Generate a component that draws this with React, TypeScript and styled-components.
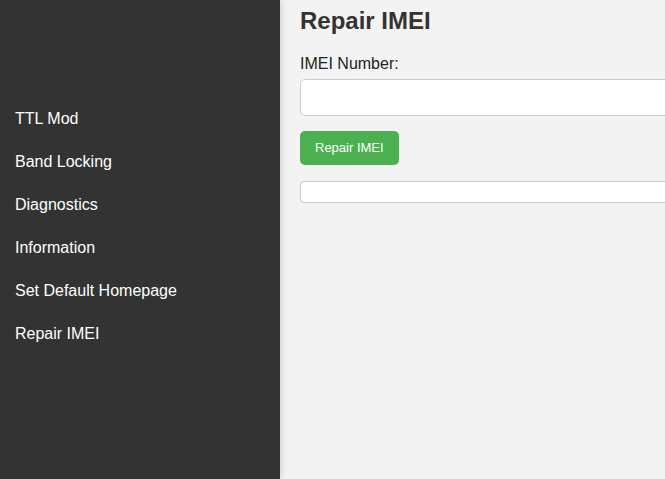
import React from "react";
import styled, { createGlobalStyle } from "styled-components";

const GlobalStyle = createGlobalStyle`
  html, body {
    margin: 0;
    padding: 0;
    height: 100%;
    overflow: hidden;
    background-color: #f3f3f3;
    font-family: "Liberation Sans", Arial, sans-serif;
  }
  #root {
    height: 100%;
  }
`;

const navItems = [
  "TTL Mod",
  "Band Locking",
  "Diagnostics",
  "Information",
  "Set Default Homepage",
  "Repair IMEI",
];

function App() {
  return (
    <>
      <GlobalStyle />
      <Layout>
        <Sidebar>
          <NavList>
            {navItems.map((item) => (
              <NavItem key={item}>{item}</NavItem>
            ))}
          </NavList>
        </Sidebar>
        <Main>
          <Title>Repair IMEI</Title>
          <Label htmlFor="imei">IMEI Number:</Label>
          <TextInput id="imei" type="text" />
          <GreenButton>Repair IMEI</GreenButton>
          <Output />
        </Main>
      </Layout>
    </>
  );
}

export default App;

const Layout = styled.div`
  display: flex;
  height: 100vh;
  width: 100vw;
  overflow: hidden;
`;

const Sidebar = styled.nav`
  flex: 0 0 280px;
  width: 280px;
  height: 100%;
  background-color: #333333;
  box-shadow: 2px 0 6px rgba(0, 0, 0, 0.12);
  position: relative;
  z-index: 1;
`;

const NavList = styled.ul`
  list-style: none;
  margin: 0;
  padding: 97px 0 0;
`;

const NavItem = styled.li`
  padding: 12px 15px;
  font-size: 16px;
  line-height: 19px;
  color: #ffffff;
  cursor: pointer;
`;

const Main = styled.main`
  flex: 0 0 600px;
  display: flex;
  flex-direction: column;
  align-items: flex-start;
  padding: 7px 20px 0;
`;

const Title = styled.h2`
  margin: 0 0 20px;
  font-size: 24px;
  font-weight: 700;
  line-height: 27.6px;
  color: #333333;
`;

const Label = styled.label`
  display: block;
  margin-bottom: 6px;
  font-size: 16px;
  line-height: 18.4px;
  color: #222222;
`;

const TextInput = styled.input`
  box-sizing: border-box;
  width: 100%;
  height: 37px;
  margin: 0 0 15px;
  padding: 8px 10px;
  border: 1px solid #cccccc;
  border-radius: 5px;
  background-color: #ffffff;
  font-size: 16px;
  font-family: inherit;
  outline: none;
`;

const GreenButton = styled.button`
  box-sizing: border-box;
  height: 34px;
  padding: 0 15px;
  border: none;
  border-radius: 5px;
  background-color: #4caf50;
  color: #ffffff;
  font-family: inherit;
  font-size: 13px;
  line-height: 14px;
  cursor: pointer;
`;

const Output = styled.div`
  box-sizing: border-box;
  width: 100%;
  height: 22px;
  margin-top: 16px;
  border: 1px solid #cccccc;
  border-radius: 4px;
  background-color: #ffffff;
`;
